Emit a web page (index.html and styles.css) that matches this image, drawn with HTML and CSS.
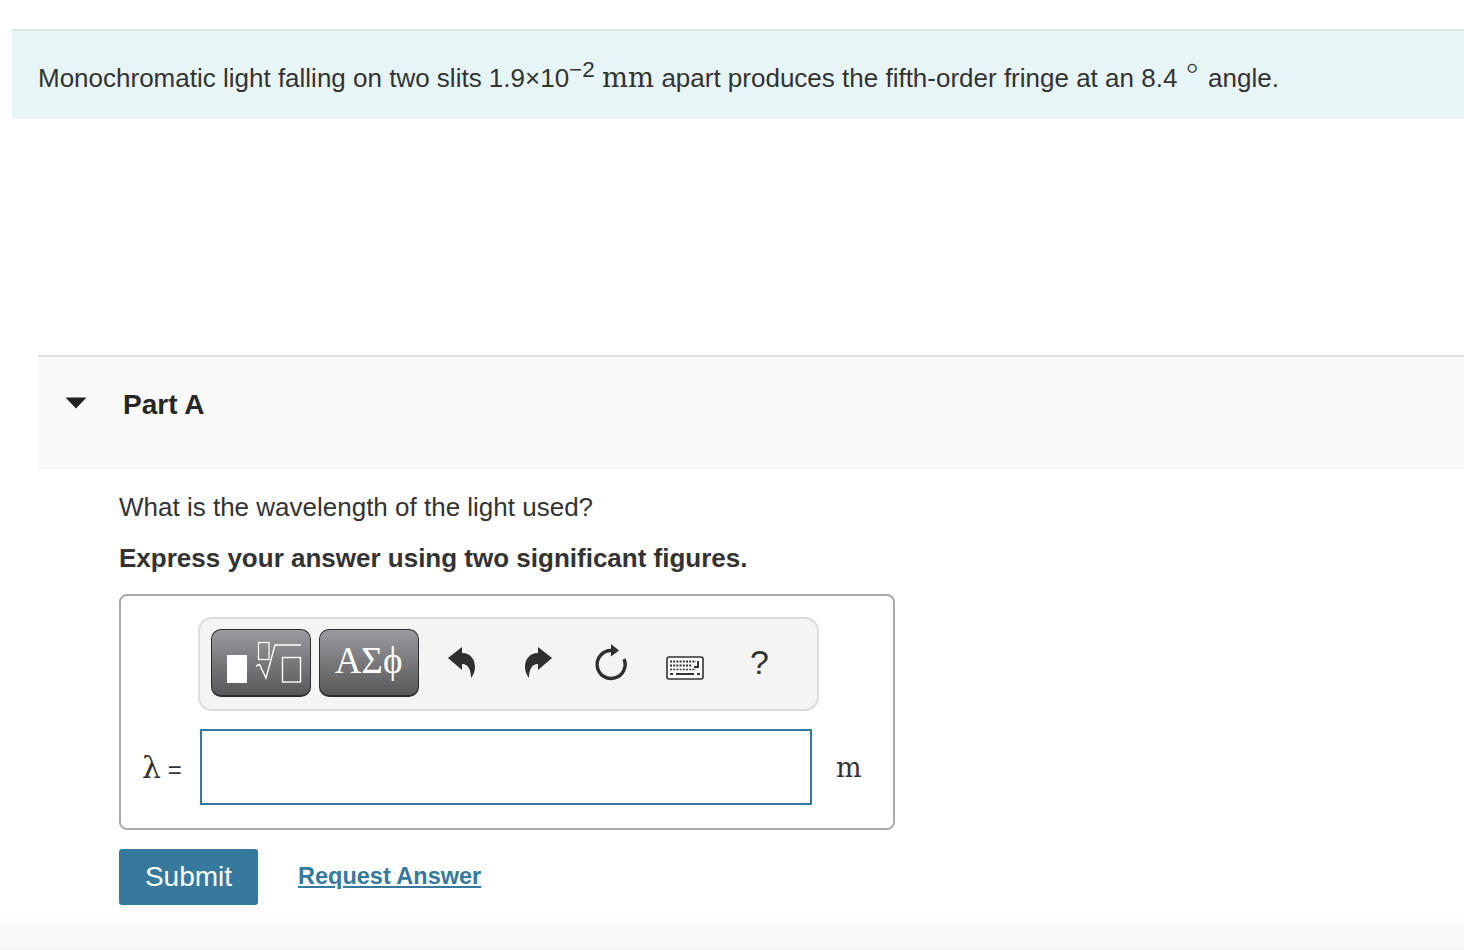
FILE: index.html
```html
<!DOCTYPE html>
<html lang="en">
<head>
<meta charset="utf-8">
<title>Part A</title>
<link rel="stylesheet" href="styles.css">
</head>
<body>
<main class="page">
  <section class="intro">
    <p class="intro-text">Monochromatic light falling on two slits 1.9×10<sup class="exp">−2</sup> <span class="unit">mm</span> apart produces the fifth-order fringe at an 8.4 <sup class="deg">∘</sup> angle.</p>
  </section>
  <section class="part">
    <header class="part-head">
      <svg class="caret" width="22" height="12" viewBox="0 0 22 12"><path d="M0.5 0.5h21L11 11.5z" fill="#222"/></svg>
      <h2 class="part-title">Part A</h2>
    </header>
    <div class="part-body">
      <p class="question">What is the wavelength of the light used?</p>
      <p class="instruction">Express your answer using two significant figures.</p>
      <div class="answer-box">
        <div class="toolbar">
          <button class="tool-btn tool-templates" type="button" aria-label="Templates">
            <svg width="98" height="65" viewBox="0 0 98 65">
              <rect x="15" y="25" width="20" height="28" fill="#fff"/>
              <rect x="46.500" y="12.500" width="10.500" height="17" fill="none" stroke="#fff" stroke-width="1.200"/>
              <path d="M44 36l3.500-1.500 6.500 13.500 9-33h26" fill="none" stroke="#fff" stroke-width="1.400"/>
              <rect x="70.500" y="27.500" width="18" height="24.500" fill="none" stroke="#fff" stroke-width="1.400"/>
            </svg>
          </button>
          <button class="tool-btn tool-greek" type="button">ΑΣϕ</button>
          <button class="tool-icon tool-undo" type="button" aria-label="Undo">
            <svg width="29" height="32" viewBox="0 0 29 32"><path d="M1 11 L15 0 V6 C24 6 28 13 28 20 C28 25 26 28 24 31 C24 24 22 17 15 17 V23 Z" fill="#2f2f2f"/></svg>
          </button>
          <button class="tool-icon tool-redo" type="button" aria-label="Redo">
            <svg width="29" height="32" viewBox="0 0 29 32"><path d="M28 11 L14 0 V6 C5 6 1 13 1 20 C1 25 3 28 5 31 C5 24 7 17 14 17 V23 Z" fill="#2f2f2f"/></svg>
          </button>
          <button class="tool-icon tool-reset" type="button" aria-label="Reset">
            <svg width="36" height="38" viewBox="0 0 36 38"><path d="M18 6.500 A14 14 0 1 0 31 15" fill="none" stroke="#2f2f2f" stroke-width="3.400"/><path d="M18 0 L26 6.500 L18 12.500 Z" fill="#2f2f2f"/></svg>
          </button>
          <button class="tool-icon tool-keys" type="button" aria-label="Keyboard">
            <svg width="38" height="24" viewBox="0 0 38 24"><rect x="1" y="1" width="36" height="22" rx="2" fill="#fff" stroke="#333" stroke-width="1.600"/><path d="M4 5.500h26" stroke="#333" stroke-width="2" stroke-dasharray="2 1.200"/><path d="M4 9.500h22" stroke="#333" stroke-width="2" stroke-dasharray="2 1.200"/><path d="M32 5v6h-4" stroke="#333" stroke-width="2" fill="none"/><path d="M4 13.500h26" stroke="#333" stroke-width="1.600" stroke-dasharray="2 1.200"/><path d="M4 18h3M10 18h18M31 18h3" stroke="#333" stroke-width="2"/></svg>
          </button>
          <button class="tool-help" type="button">?</button>
        </div>
        <div class="answer-row">
          <label class="symbol"><span class="lambda">λ</span> =</label>
          <input class="answer-input" type="text" aria-label="answer">
          <span class="answer-unit">m</span>
        </div>
      </div>
      <div class="actions">
        <button class="submit" type="button">Submit</button>
        <a class="request" href="#">Request Answer</a>
      </div>
    </div>
  </section>
</main>
<div class="bottom-fade"></div>
</body>
</html>
```
FILE: styles.css
```css
* { box-sizing: border-box; }
html, body { margin: 0; height: 100%; background: #fff; overflow: hidden; }
body { font-family: "Liberation Sans", Arial, sans-serif; color: #333; position: relative; }
.page { padding: 29px 0 0 12px; }
.intro { height: 90px; background: #e8f5f6; border-top: 2px solid #e0e2e2; padding: 0 0 0 26px; }
.intro-text { margin: 0; padding-top: 26px; font-size: 26px; line-height: 40px; white-space: nowrap; }
.exp { font-size: 22.500px; line-height: 0; vertical-align: 10px; }
.unit { font-family: "DejaVu Serif", serif; font-size: 27.500px; font-weight: 300; }
.deg { font-family: "DejaVu Sans", sans-serif; font-size: 34px; font-weight: 300; line-height: 0; vertical-align: 8px; margin: 0 -2px 0 -3px; }
.part { margin: 236px 0 0 26px; }
.part-head { height: 115px; background: #f9f9f9; border-top: 2px solid #e0e0e0; display: flex; align-items: flex-start; padding: 30px 0 0 27px; }
.caret { margin-top: 10px; margin-right: 36px; }
.part-title { margin: 0; font-size: 28px; line-height: 36px; font-weight: 700; color: #262626; }
.part-body { padding: 17px 0 0 81px; }
.question { margin: 0; font-size: 26px; line-height: 40px; }
.instruction { margin: 11px 0 0; font-size: 26px; line-height: 40px; font-weight: 700; }
.answer-box { margin-top: 16px; width: 776px; height: 236px; border: 2px solid #aaa; border-radius: 8px; padding: 21px 0 0 77px; background: #fff; }
.toolbar { width: 621px; height: 94px; background: #f4f4f4; border: 2px solid #ddd; border-radius: 14px; display: flex; align-items: center; padding: 0 0 2px 11px; }
.tool-btn { height: 68px; border: 1px solid #2c2c2c; border-bottom-width: 2px; border-radius: 10px; background: linear-gradient(#9a9a9f, #58585a); padding: 0; color: #fff; display: flex; align-items: center; justify-content: center; }
.tool-templates { width: 100px; margin-right: 8px; }
.tool-greek { width: 100px; font-family: "Liberation Serif", serif; font-size: 37px; padding: 0 1px 5px 0; }
.tool-icon { border: 0; background: none; padding: 0; display: flex; align-items: center; justify-content: center; }
.tool-undo { margin-left: 28px; }
.tool-redo { margin-left: 48px; }
.tool-reset { margin-left: 40px; }
.tool-keys { margin: 10px 0 0 37px; }
.tool-help { border: 0; background: none; padding: 0 0 2px; margin-left: 46px; font: 34px "Liberation Sans", sans-serif; color: #333; }
.answer-row { display: flex; align-items: center; margin: 18px 0 0 -56px; }
.symbol { width: 57px; font-size: 24px; white-space: nowrap; }
.lambda { font-family: "DejaVu Serif", serif; font-size: 30px; }
.answer-input { width: 612px; height: 76px; border: 2px solid #37799c; background: #fff; outline: 0; margin-left: 1px; }
.answer-unit { margin-left: 24px; font-family: "DejaVu Serif", serif; font-size: 27px; }
.actions { margin-top: 19px; display: flex; align-items: center; gap: 40px; }
.submit { width: 139px; height: 56px; border: 0; border-radius: 3px; background: #37799c; color: #fff; font: 28px "Liberation Sans", sans-serif; padding: 0; }
.request { margin-bottom: 2px; font-size: 23.500px; font-weight: 700; color: #37799c; text-decoration: underline; }
.bottom-fade { position: absolute; left: 0; right: 0; bottom: 0; height: 36px; background: linear-gradient(rgba(245,245,245,0), #f5f5f5); }
```
